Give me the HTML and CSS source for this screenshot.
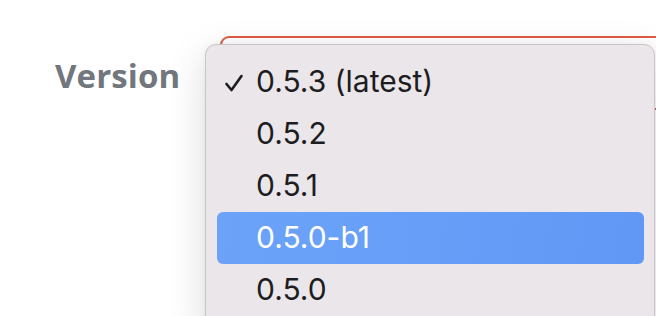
FILE: index.html
```html
<!doctype html>
<html lang="en">
  <head>
    <meta charset="UTF-8" />
    <meta name="viewport" content="width=device-width, initial-scale=1.0" />
    <title>Version picker</title>
    <link rel="stylesheet" href="styles.css">
  </head>
  <body>
    <div class="form-row">
      <label class="field-label" for="version">Version</label>

      <div class="select-wrap">
        <div id="version" class="select"></div>

        <ul class="menu" role="listbox">
          <li class="option checked" role="option">
            <svg class="check" width="20" height="18" viewBox="0 0 20 18" aria-hidden="true">
              <path d="M2.5 10 L7.5 16 L17.5 2" fill="none" stroke="#1d1d1f" stroke-width="2.6" stroke-linecap="round" stroke-linejoin="round" />
            </svg>
            0.5.3 (latest)
          </li>
          <li class="option" role="option">0.5.2</li>
          <li class="option" role="option">0.5.1</li>
          <li class="option active" role="option">0.5.0-b1</li>
          <li class="option" role="option">0.5.0</li>
        </ul>
      </div>
    </div>
  </body>
</html>
```

FILE: styles.css
```css
html,
body {
  margin: 0;
  padding: 0;
  height: 100%;
  overflow: hidden;
  background-color: #fff;
}

*,
*:before,
*:after {
  box-sizing: border-box;
}

.form-row {
  display: flex;
  align-items: flex-start;
  padding: 36px 0 0 55px;
}

.field-label {
  width: 165px;
  margin-top: 18px;
  color: #72777e;
  font: 700 33px/44px "Open Sans", sans-serif;
  letter-spacing: 0.1px;
}

.select-wrap {
  position: relative;
  flex: 1;
}

.select {
  height: 74px;
  margin-right: -20px;
  border: 2px solid #de5b43;
  border-radius: 9px;
  background-color: #fff;
}

/* Native-looking popup menu, drawn over the select */
.menu {
  position: absolute;
  top: 8px;
  left: -15px;
  width: 450px;
  margin: 0;
  padding: 11px 10px 20px 11px;
  list-style: none;
  border: 1px solid #c9c6c9;
  border-radius: 11px;
  background-color: #eae6e9;
  box-shadow: 0 12px 40px rgba(0, 0, 0, 0.14), 0 0 6px rgba(0, 0, 0, 0.05);
}

.option {
  position: relative;
  height: 52px;
  padding-left: 39px;
  border-radius: 6px;
  color: #1d1d1f;
  font: 400 30px/51px Inter, "Liberation Sans", sans-serif;
  white-space: nowrap;

  &.active {
    background: linear-gradient(100deg, #6ca3f9, #6198f6);
    color: #fff;
  }
}

.check {
  position: absolute;
  top: 18px;
  left: 7px;
}
```
